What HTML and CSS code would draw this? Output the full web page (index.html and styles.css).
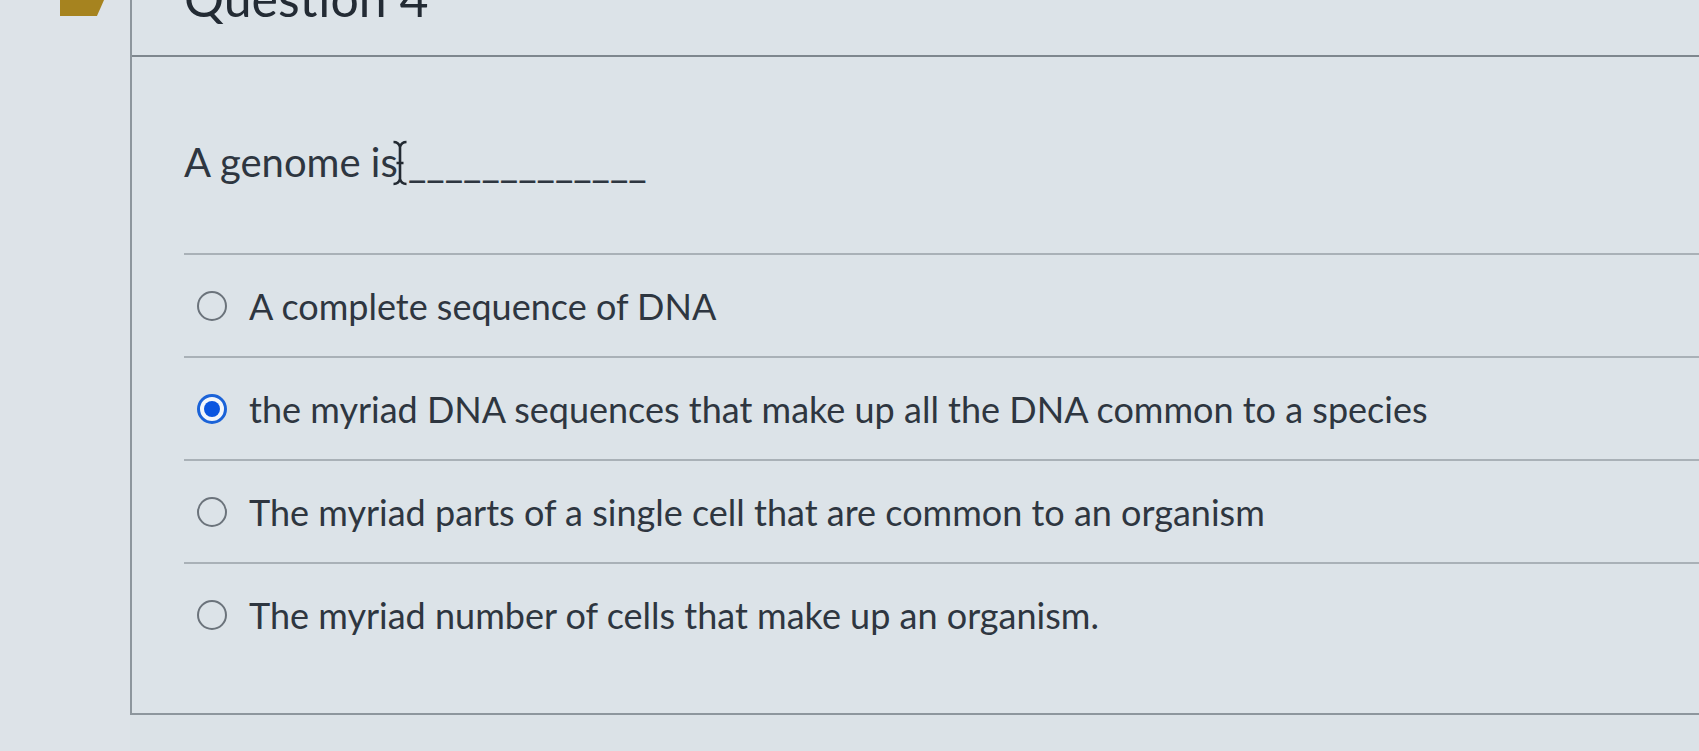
FILE: index.html
```html
<!DOCTYPE html>
<html lang="en">
<head>
<meta charset="utf-8">
<title>Question 4</title>
<link rel="stylesheet" href="styles.css">
</head>
<body>
<div class="page">
  <div class="gutter">
    <div class="flag"></div>
  </div>
  <div class="card">
    <div class="card-header">
      <h2 class="title">Question 4</h2>
    </div>
    <div class="card-body">
      <div class="question">
        <p class="prompt">A genome is<span class="caret-wrap"><svg class="ibeam" width="16" height="46" viewBox="0 0 16 46"><path d="M1.5 2 C5 2 7 3.5 8 7 C9 3.5 11 2 14.5 2 M8 7 V39 M1.5 44 C5 44 7 42.5 8 39 C9 42.5 11 44 14.5 44 M4.5 23 H11.5" fill="none" stroke="#232a32" stroke-width="2.6"/></svg></span> _____________</p>
      </div>
      <ul class="answers">
        <li class="answer"><span class="radio"></span><span class="label">A complete sequence of DNA</span></li>
        <li class="answer"><span class="radio checked"></span><span class="label">the myriad DNA sequences that make up all the DNA common to a species</span></li>
        <li class="answer"><span class="radio"></span><span class="label">The myriad parts of a single cell that are common to an organism</span></li>
        <li class="answer"><span class="radio"></span><span class="label">The myriad number of cells that make up an organism.</span></li>
      </ul>
    </div>
  </div>
</div>
</body>
</html>
```

FILE: styles.css
```css
html, body {
  margin: 0;
  padding: 0;
  height: 100%;
  overflow: hidden;
}
body {
  background: #dbe2e7;
  font-family: Lato, "Open Sans", "Liberation Sans", sans-serif;
  color: #2b333d;
}
.page {
  display: flex;
  align-items: flex-start;
}
.gutter {
  width: 130px;
  flex: 0 0 130px;
  background: #dde3e8;
  height: 751px;
}
.flag {
  margin-left: 60px;
  width: 44px;
  height: 16px;
  background: #a6831f;
  clip-path: polygon(0 0, 100% 0, 84% 100%, 0 100%);
}
.card {
  flex: 1 1 auto;
  border-left: 2px solid #8d969d;
  border-bottom: 2px solid #8d969d;
  background: #dce3e8;
}
.card-header {
  height: 55px;
  border-bottom: 2px solid #7e878e;
  padding-left: 52px;
  overflow: hidden;
}
.title {
  margin: -32px 0 0 0;
  font-size: 50px;
  font-weight: 400;
  line-height: 60px;
  color: #232b34;
}
.card-body {
  padding-left: 52px;
  padding-bottom: 48px;
}
.question {
  height: 196px;
  border-bottom: 2px solid #a9b1b7;
}
.prompt {
  margin: 0;
  padding-top: 81px;
  font-size: 40px;
  line-height: 48px;
  color: #2e3640;
}
.caret-wrap {
  position: relative;
  display: inline-block;
  width: 0;
}
.ibeam {
  position: absolute;
  left: -6px;
  top: -37px;
}
.answers {
  list-style: none;
  margin: 0;
  padding: 0;
}
.answer {
  display: flex;
  align-items: center;
  height: 101px;
  border-bottom: 2px solid #a9b1b7;
}
.answer:last-child {
  border-bottom: none;
}
.radio {
  box-sizing: border-box;
  width: 30px;
  height: 30px;
  margin-left: 13px;
  margin-right: 22px;
  border: 2.5px solid #6b737b;
  border-radius: 50%;
  flex: 0 0 auto;
  position: relative;
}
.radio.checked {
  border: 3px solid #1b63d8;
  background: #f2f6fb;
}
.radio.checked::after {
  content: "";
  position: absolute;
  left: 4px;
  top: 4px;
  width: 16px;
  height: 16px;
  border-radius: 50%;
  background: #0a55e0;
}
.label {
  font-size: 36px;
  line-height: 42px;
  color: #2e3640;
}
```
